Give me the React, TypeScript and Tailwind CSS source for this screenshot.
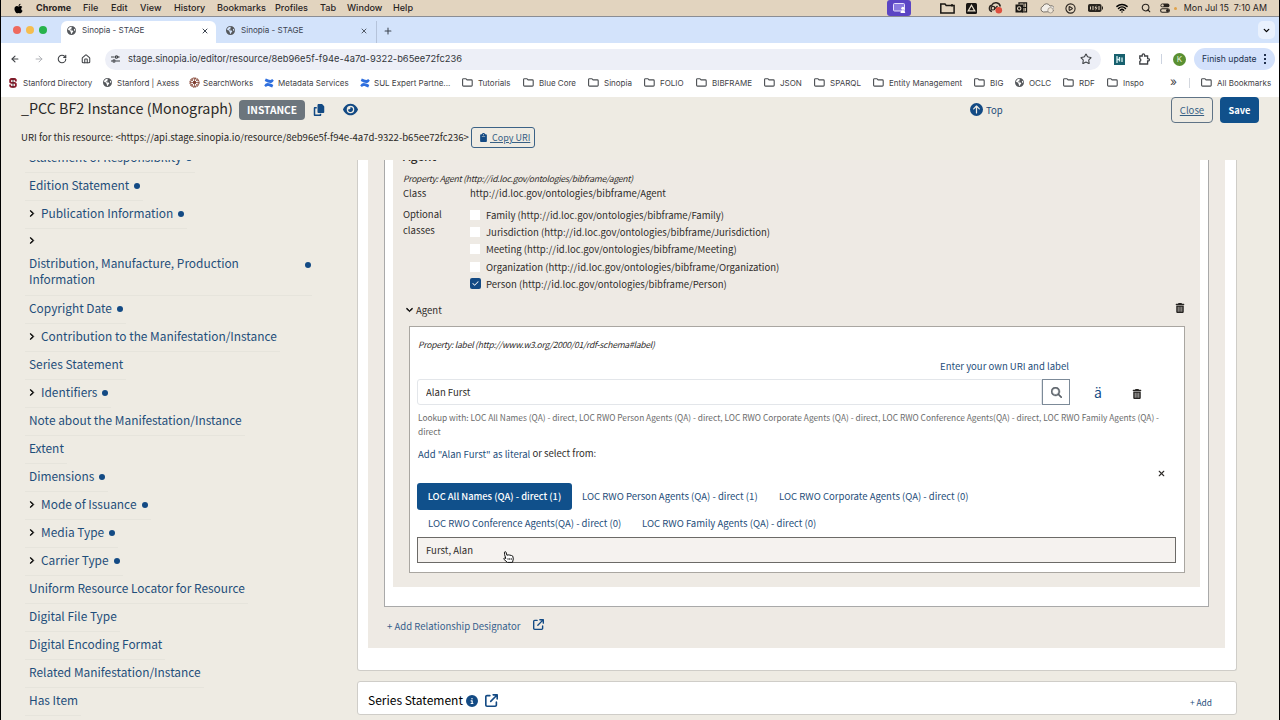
import React, { useState } from 'react';
import {
  FaApple, FaArrowUpRightFromSquare, FaCheck, FaChevronDown, FaChevronRight, FaCircleArrowUp,
  FaCircleInfo, FaClipboard, FaCopy, FaEye, FaMagnifyingGlass, FaTrashCan, FaEarthAmericas,
} from 'react-icons/fa6';
import { ArrowLeft, ArrowRight, ChevronDown, CirclePlay, House, Plus, RotateCw, Search, Star, Wifi, X } from 'lucide-react';

const MENUS = [
  { label: 'Chrome', slot: 'w-[47px] font-bold' },
  { label: 'File', slot: 'w-[28px]' },
  { label: 'Edit', slot: 'w-[29px]' },
  { label: 'View', slot: 'w-[34px]' },
  { label: 'History', slot: 'w-[43px]' },
  { label: 'Bookmarks', slot: 'w-[58px]' },
  { label: 'Profiles', slot: 'w-[45px]' },
  { label: 'Tab', slot: 'w-[27px]' },
  { label: 'Window', slot: 'w-[46px]' },
  { label: 'Help', slot: 'w-[30px]' },
];

const BOOKMARKS = [
  { label: 'Stanford Directory', icon: 'stanford', slot: 'w-[94px]' },
  { label: 'Stanford | Axess', icon: 'globe', slot: 'w-[86px]' },
  { label: 'SearchWorks', icon: 'wheel', slot: 'w-[75px]' },
  { label: 'Metadata Services', icon: 'confluence', slot: 'w-[96px]' },
  { label: 'SUL Expert Partne...', icon: 'confluence', slot: 'w-[102px]' },
  { label: 'Tutorials', icon: 'folder', slot: 'w-[61px]' },
  { label: 'Blue Core', icon: 'folder', slot: 'w-[65px]' },
  { label: 'Sinopia', icon: 'folder', slot: 'w-[56px]' },
  { label: 'FOLIO', icon: 'folder', slot: 'w-[52px]' },
  { label: 'BIBFRAME', icon: 'folder', slot: 'w-[68px]' },
  { label: 'JSON', icon: 'folder', slot: 'w-[50px]' },
  { label: 'SPARQL', icon: 'folder', slot: 'w-[59px]' },
  { label: 'Entity Management', icon: 'folder', slot: 'w-[101px]' },
  { label: 'BIG', icon: 'folder', slot: 'w-[41px]' },
  { label: 'OCLC', icon: 'globe', slot: 'w-[48px]' },
  { label: 'RDF', icon: 'folder', slot: 'w-[44px]' },
  { label: 'Inspo', icon: 'folder', slot: 'w-[63px]' },
];

const NAV = [
  { label: 'Statement of Responsibility', dot: true },
  { label: 'Edition Statement', dot: true },
  { label: 'Publication Information', dot: true, expand: true },
  { label: 'Distribution, Manufacture, Production Information', dot: true, expand: true, wrap: true },
  { label: 'Copyright Date', dot: true },
  { label: 'Contribution to the Manifestation/Instance', expand: true },
  { label: 'Series Statement' },
  { label: 'Identifiers', dot: true, expand: true },
  { label: 'Note about the Manifestation/Instance' },
  { label: 'Extent' },
  { label: 'Dimensions', dot: true },
  { label: 'Mode of Issuance', dot: true, expand: true },
  { label: 'Media Type', dot: true, expand: true },
  { label: 'Carrier Type', dot: true, expand: true },
  { label: 'Uniform Resource Locator for Resource' },
  { label: 'Digital File Type' },
  { label: 'Digital Encoding Format' },
  { label: 'Related Manifestation/Instance' },
  { label: 'Has Item' },
];

const CLASSES = ['Family', 'Jurisdiction', 'Meeting', 'Organization', 'Person'];

const BookmarkIcon: React.FC<{ kind: string }> = ({ kind }) => {
  if (kind === 'folder') {
    return (
      <svg width="11" height="9" viewBox="0 0 11 9" fill="none" stroke="#4a4d51" strokeWidth="1.1">
        <path d="M.6 1.6c0-.6.3-.9.9-.9h2.4l1.2 1.2h4.2c.6 0 .9.3.9.9v4.4c0 .6-.3.9-.9.9H1.5c-.6 0-.9-.3-.9-.9z" />
      </svg>
    );
  }
  if (kind === 'globe') return <FaEarthAmericas size={9} className="text-[#55585c]" />;
  if (kind === 'stanford') {
    return (
      <svg width="8" height="10" viewBox="0 0 8 10" fill="none" stroke="#8c1d2c">
        <path d="M6.8 3.4V2L5.8 1H2.2l-1 1v2l1 .9h3.6l1 .9v2.1l-1 1H2.2l-1-1V6.6" strokeWidth="1.9" />
        <path d="M4 .2v9.6" stroke="#4b2a30" strokeWidth="1" />
      </svg>
    );
  }
  if (kind === 'wheel') {
    return (
      <svg width="11" height="11" viewBox="0 0 12 12" stroke="#8f5547" fill="none">
        <circle cx="6" cy="6" r="4.6" strokeWidth="2" strokeDasharray="1.3 .5" />
        <path d="M6 1v10M1 6h10M2.5 2.5l7 7M9.500 2.500l-7 7" strokeWidth=".9" />
        <circle cx="6" cy="6" r="1.6" fill="#7c3b2e" stroke="none" />
      </svg>
    );
  }
  return (
    <svg width="10" height="10" viewBox="0 0 10 10" fill="#2f6fde">
      <path d="M.2 7.600C2.300 4.200 4.400 4.400 9.300 7L8.200 9.500C5 8.100 3.400 7.300 1.900 9z" />
      <path d="M9.800 2.400C7.700 5.800 5.600 5.600.700 3L1.800.5C5 1.900 6.600 2.700 8.100 1z" />
    </svg>
  );
};

const MenuBar = () => (
  <div className="h-[17px] bg-[#e2d4bf] border-b border-[#8b8d93] flex items-center pl-[12px] text-[9.1px] text-[#28231e] font-medium whitespace-nowrap">
    <div className="w-[23px]"><FaApple size={11} className="text-black" /></div>
    {MENUS.map(m => <span key={m.label} className={m.slot}>{m.label}</span>)}
    <div className="ml-[464px] w-[24px] h-[16px] rounded-[3px] bg-[#5b45c4] flex items-center justify-center">
      <svg width="13" height="10" viewBox="0 0 13 10">
        <rect x=".5" y=".5" width="11" height="7.500" rx="1" fill="#8b7be0" stroke="#e6e1fb" />
        <path d="M7.500 10c0-2 .8-2.800 2.300-2.800s2.400.8 2.400 2.800z" fill="#fff" />
        <circle cx="9.800" cy="5.200" r="1.500" fill="#fff" />
      </svg>
    </div>
    <svg className="ml-[29px]" width="15" height="11" viewBox="0 0 15 11" fill="none" stroke="#191613" strokeWidth="1.500">
      <path d="M.8 10V1h4.200l1.200 1.500h7.900V10z" />
      <path d="M12 1v2.500" />
    </svg>
    <svg className="ml-[11px]" width="11" height="11" viewBox="0 0 11 11">
      <rect width="11" height="11" rx="1.500" fill="#191613" />
      <path d="M5.500 2.300 8.800 7.900H2.200z" fill="none" stroke="#e9dfcd" strokeWidth="1.200" />
    </svg>
    <svg className="ml-[11px]" width="15" height="12" viewBox="0 0 15 12" fill="none">
      <path d="M4 9.500a3.200 3.200 0 0 1-.3-6.200 4.600 4.600 0 0 1 8.600 1.200" stroke="#2b2521" strokeWidth="1.500" />
      <circle cx="5" cy="6.200" r="1.800" stroke="#2b2521" strokeWidth="1.200" />
      <path d="M6 7.500 9.500 4" stroke="#2b2521" strokeWidth="1.200" />
      <circle cx="10.800" cy="8.200" r="3.300" fill="#dd4f3f" />
    </svg>
    <svg className="ml-[12px]" width="13" height="12" viewBox="0 0 13 12" fill="none" stroke="#191613">
      <path d="M4 2.500V.8h7.500v9H7" strokeWidth="1.300" />
      <path d="M7.500 5.500h4M9 1v8" strokeWidth="1" />
      <rect x="1" y="3" width="6.500" height="7" fill="#191613" />
      <circle cx="4.200" cy="6.500" r="1.700" stroke="#e2d4bf" strokeWidth="1.100" />
    </svg>
    <svg className="ml-[12px]" width="14" height="11" viewBox="0 0 14 11">
      <path d="M3.500 9A3 3 0 0 1 3 3.200 3.800 3.800 0 0 1 10 3a3 3 0 0 1 2.500 5.500z" fill="#f2eee8" stroke="#5d574f" strokeWidth=".8" />
      <circle cx="10.500" cy="7.300" r="2.700" fill="#efe6d8" stroke="#8b847b" strokeWidth=".7" />
    </svg>
    <CirclePlay size={11} className="ml-[11px] text-[#28231e]" strokeWidth={2.4} />
    <svg className="ml-[12px]" width="15" height="8" viewBox="0 0 15 8">
      <rect width="13.500" height="8" rx="1.800" fill="#29251f" />
      <rect x="14" y="2.500" width="1" height="3" fill="#29251f" />
      <path d="M2.500 2.500v3M5 2v4M11 2v4" stroke="#e2d4bf" />
      <path d="M8.500 1 6.500 4.300h1.400L7.200 7l2.300-3.400H8z" fill="#e2d4bf" />
    </svg>
    <Wifi size={12} className="ml-[13px] text-black" strokeWidth={3} />
    <Search size={10} className="ml-[13px] text-[#28231e]" strokeWidth={2.600} />
    <svg className="ml-[9px]" width="10" height="10" viewBox="0 0 10 10">
      <rect x=".5" y=".5" width="9" height="3.800" rx="1.900" fill="#28231e" />
      <rect x=".6" y="5.700" width="8.800" height="3.600" rx="1.800" fill="none" stroke="#28231e" strokeWidth="1.100" />
      <circle cx="2.500" cy="2.400" r="1.200" fill="#e2d4bf" />
      <circle cx="7.500" cy="7.500" r="1.500" fill="#28231e" />
    </svg>
    <i className="ml-[4px] w-[3px] h-[3px] rounded-full bg-[#e0a24a]" />
    <span className="ml-auto mr-[12px] font-normal text-[8.900px]">Mon Jul 15&nbsp; 7:10 AM</span>
  </div>
);

const TabStrip = () => (
  <div className="h-[26px] bg-[#d3e3fb] flex items-end text-[8.100px] text-[#3d4450] whitespace-nowrap">
    <div className="flex gap-[5px] pl-[12px] w-[60px] h-full items-center">
      <i className="w-[8px] h-[8px] rounded-full bg-[#ee6a5f]" />
      <i className="w-[8px] h-[8px] rounded-full bg-[#f5bd4f]" />
      <i className="w-[8px] h-[8px] rounded-full bg-[#27b34b]" />
    </div>
    <div className="w-[155px] h-[22px] rounded-t-[6px] bg-white flex items-center pl-[6px] pb-[3px]">
      <FaEarthAmericas size={9} className="text-[#55585c]" />
      <span className="ml-[6px] grow">Sinopia - STAGE</span>
      <X size={8} strokeWidth={3} className="mr-[7px]" />
    </div>
    <div className="w-[161px] h-[22px] flex items-center pl-[10px] pb-[3px] border-r border-[#b5c3da]">
      <FaEarthAmericas size={9} className="text-[#55585c]" />
      <span className="ml-[6px] grow">Sinopia - STAGE</span>
      <X size={8} strokeWidth={2.600} className="mr-[8px]" />
    </div>
    <div className="h-[22px] flex items-center pb-[3px] pl-[6px]"><Plus size={10} strokeWidth={2.500} /></div>
    <div className="ml-auto mr-[4px] mb-[4px] w-[17px] h-[18px] rounded-[5px] bg-[#e9f1fd] flex items-center justify-center text-black">
      <ChevronDown size={9} strokeWidth={3.500} />
    </div>
  </div>
);

const Toolbar = () => (
  <div className="h-[30px] bg-white flex items-center pt-[2px] text-[#3f4246] text-[9.350px] whitespace-nowrap">
    <div className="flex items-center w-[104px] pl-[9px]">
      <ArrowLeft size={10} strokeWidth={2.600} />
      <ArrowRight size={10} strokeWidth={2.200} className="ml-[14px] text-[#a9abb0]" />
      <RotateCw size={10} strokeWidth={2.600} className="ml-[13px]" />
      <House size={10} strokeWidth={2.500} className="ml-[14px]" />
    </div>
    <div className="w-[996px] h-[21px] rounded-full bg-[#edeff7] flex items-center pl-[6px]">
      <svg width="9" height="8" viewBox="0 0 9 8" fill="none" stroke="#3f4246" strokeWidth="1.200">
        <path d="M0 2h3.500M5 6h4M0 6h1" />
        <path d="M8.500 2H6" />
        <circle cx="5.500" cy="2" r="1.200" />
        <circle cx="3" cy="6" r="1.200" />
      </svg>
      <span className="ml-[8px] grow text-[#33363a]">stage.sinopia.io/editor/resource/8eb96e5f-f94e-4a7d-9322-b65ee72fc236</span>
      <Star size={12} strokeWidth={2.200} className="mr-[9px]" />
    </div>
    <div className="ml-[13px] w-[11px] h-[11px] bg-[#17606e] flex items-center justify-center">
      <svg width="7" height="7" viewBox="0 0 7 7" fill="none" stroke="#d6f0f2" strokeWidth="1.300">
        <path d="M1 0v7M1 3.500h2.500v2M3.500 1v2.500M6 1.500v4.500" />
      </svg>
    </div>
    <svg className="ml-[14px]" width="11" height="12" viewBox="0 0 11 12" fill="none" stroke="#3f4246" strokeWidth="1.300">
      <path d="M.8 3h2.400V2a1.200 1.200 0 0 1 2.400 0v1h3v2.600h.6a1.200 1.200 0 0 1 0 2.400h-.6v3H.8V8.300a1.400 1.400 0 0 0 0-2.700z" />
    </svg>
    <i className="ml-[11px] w-px h-[10px] bg-[#ccd3e0]" />
    <div className="ml-[11px] w-[13px] h-[13px] rounded-full bg-[#5a9032] text-[#e3f0da] text-[8px] flex items-center justify-center">K</div>
    <div className="ml-[8px] w-[81px] h-[22px] rounded-full bg-[#d3e1fb] flex items-center pl-[8px] text-[8.600px] text-[#20304d]">
      Finish update
      <span className="ml-auto mr-[9px] flex flex-col gap-[2px]">
        <i className="w-[2px] h-[2px] bg-[#20304d]" />
        <i className="w-[2px] h-[2px] bg-[#20304d]" />
        <i className="w-[2px] h-[2px] bg-[#20304d]" />
      </span>
    </div>
  </div>
);

const BookmarksBar = () => (
  <div className="h-[24px] bg-white flex items-center pl-[8px] pb-[5px] text-[8px] text-[#3f4246] whitespace-nowrap">
    {BOOKMARKS.map(b => (
      <div key={b.label} className={`${b.slot} flex items-center shrink-0`}>
        <span className={b.icon === 'folder' ? 'w-[16px]' : 'w-[14px]'}><BookmarkIcon kind={b.icon} /></span>
        {b.label}
      </div>
    ))}
    <span className="w-[19px] text-[12px] leading-none pb-[2px]">»</span>
    <i className="w-px h-[10px] bg-[#d3d7de]" />
    <div className="ml-[11px] flex items-center"><span className="w-[16px]"><BookmarkIcon kind="folder" /></span>All Bookmarks</div>
  </div>
);

const Header = () => (
  <div className="h-[63px] shrink-0 px-[20px] flex flex-col whitespace-nowrap">
    <div className="flex items-center h-[26px]">
      <h1 className="text-[14.300px] leading-[20px] pb-[4px] text-[#2a2826] w-[218px]">_PCC BF2 Instance (Monograph)</h1>
      <span className="w-[66px] h-[20px] rounded-[4px] bg-[#6c757d] text-white font-bold text-[10.200px] leading-[19px] text-center">INSTANCE</span>
      <FaCopy size={12} className="ml-[8px] mb-px text-[#134a84]" />
      <FaEye size={15} className="ml-[18px] mb-px text-[#134a84]" />
      <div className="ml-[612px] flex items-center gap-[3px] text-[9.550px] text-[#1e4c78]">
        <FaCircleArrowUp size={13} className="text-[#134a84] mb-px" />Top
      </div>
      <button className="ml-auto w-[42px] h-[26px] rounded-[4px] border border-[#5f7386] text-[9.550px] leading-[24px] text-[#375f83] underline">Close</button>
      <button className="ml-[7px] w-[39px] h-[26px] rounded-[4px] bg-[#10508b] text-white font-bold text-[9.300px] leading-[25px]">Save</button>
    </div>
    <div className="flex items-center h-[29px] text-[9.550px] text-[#2a2826]">
      <span className="w-[450px] pb-px">URI for this resource: &lt;https://api.stage.sinopia.io/resource/8eb96e5f-f94e-4a7d-9322-b65ee72fc236&gt;</span>
      <button className="w-[64px] h-[21px] rounded-[3px] border border-[#3b6286] leading-[18px] text-[9px] text-[#375f83] flex items-center pl-[7px]">
        <FaClipboard size={9} className="text-[#134a84] mr-[2px]" /><span className="underline whitespace-pre">{' '}Copy URI</span>
      </button>
    </div>
  </div>
);

const Sidebar = () => (
  <nav className="w-[356px] shrink-0 pl-[24px] mt-[-15px] text-[11.920px] text-[#1f4e7a] flex flex-col items-start">
    {NAV.map(item => (
      <div
        key={item.label}
        className={item.wrap
          ? 'w-[287px] h-[67px] border-b border-[#e6e4dc] pl-[4px] pr-0'
          : 'h-[28px] border-b border-[#e6e4dc] pl-[4px] pr-[3px] pb-[4px] flex items-center whitespace-nowrap'}
      >
        {item.wrap ? (
          <>
            <FaChevronRight size={7} className="mt-[8px] -ml-px text-black" stroke="black" strokeWidth={50} />
            <div className="flex items-center justify-between mt-[11px] leading-[16px]">
              <span className="w-[240px]">{item.label}</span>
              <i className="w-[6px] h-[6px] mb-[12px] mr-px rounded-full bg-[#134a84]" />
            </div>
          </>
        ) : (
          <>
            {item.expand && <FaChevronRight size={7} className="-ml-px mr-[6px] mt-[2px] text-black" stroke="black" strokeWidth={50} />}
            <span>{item.label}</span>
            {item.dot && <i className="w-[6px] h-[6px] ml-[5px] mt-[3px] rounded-full bg-[#134a84]" />}
          </>
        )}
      </div>
    ))}
  </nav>
);

const Lookup = () => {
  const [query, setQuery] = useState('Alan Furst');

  return (
    <div className="relative h-[247px] border border-[#a9a6a1] bg-white pl-[7px] pr-[8px] flex flex-col text-[9.550px]">
      <p className="mt-[9px] ml-px h-[16px] leading-[16px] italic text-[8.600px] tracking-[-0.25px]">Property: label (http://www.w3.org/2000/01/rdf-schema#label)</p>
      <div className="mt-[5px] h-[18px] leading-[18px] w-[652px] text-right text-[#1f4e7a]">Enter your own URI and label</div>
      <div className="mt-[4px] h-[26px] flex items-center">
        <input
          className="w-[625px] h-[26px] border border-[#e3e6ea] rounded-l-[3px] pl-[8px] leading-[20px] focus:outline-none"
          value={query}
          onChange={e => setQuery(e.target.value)}
        />
        <button className="w-[28px] h-[26px] border border-[#7c8a98] flex items-center justify-center text-[#5d646b]"><FaMagnifyingGlass size={11} stroke="currentColor" strokeWidth={20} /></button>
        <span className="ml-[24px] w-[38px] text-[14px] leading-[20px] text-[#134a84]">ä</span>
        <FaTrashCan size={10} className="mt-[3px] text-[#262422]" />
      </div>
      <p className="mt-[5px] ml-px leading-[14px] text-[8.360px] text-[#6b6b6b] whitespace-nowrap">
        Lookup with: LOC All Names (QA) - direct, LOC RWO Person Agents (QA) - direct, LOC RWO Corporate Agents (QA) - direct, LOC RWO Conference Agents(QA) - direct, LOC RWO Family Agents (QA) -<br />direct
      </p>
      <div className="mt-[6px] ml-px h-[18px] leading-[18px]"><span className="text-[#1f4e7a] relative top-px">Add "Alan Furst" as literal</span> or select from:</div>
      <button className="self-end mt-[7px] mr-[10px]"><X size={9} strokeWidth={3} /></button>
      <div className="mt-[5px] leading-[27px] text-[#1f4e7a] whitespace-nowrap flex flex-col">
        <div className="flex h-[27px]">
          <span className="w-[155px] rounded-[3px] bg-[#10508b] text-white text-center font-medium text-[9.350px]">LOC All Names (QA) - direct (1)</span>
          <span className="ml-[10px] w-[197px]">LOC RWO Person Agents (QA) - direct (1)</span>
          <span>LOC RWO Corporate Agents (QA) - direct (0)</span>
        </div>
        <div className="flex h-[27px] pl-[11px]">
          <span className="w-[214px]">LOC RWO Conference Agents(QA) - direct (0)</span>
          <span>LOC RWO Family Agents (QA) - direct (0)</span>
        </div>
      </div>
      <div className="h-[26px] shrink-0 border border-[#6c6a67] bg-[#f5f2ef] pl-[8px] leading-[24px]">Furst, Alan</div>
      <svg className="absolute left-[93px] top-[224px]" width="11" height="13" viewBox="0 0 11 13" fill="#fff" stroke="#111" strokeWidth="1">
        <path d="M2.800 7.500 1.600 3.600 1.500 1.200c.3-.7 1.200-.7 1.500 0l.9 3 1.300-.3 1.600.2 1.700.4 1.300.7.5 2.700-.8 3.500H4.400L.8 8.200c-.3-.8.6-1.400 1.200-1z" />
        <path d="M5 7v2M6.700 7v2M8.300 7v2" strokeWidth=".7" />
      </svg>
    </div>
  );
};

const AgentPanel = () => (
  <div className="h-[427px] flow-root bg-[#eeeae4] px-[9px] pl-[10px] text-[9.550px] text-[#302d2b]">
    <h4 className="mt-[-14px] h-[24px] leading-[20px] font-medium text-[12px]">Agent</h4>
    <p className="h-[15px] leading-[16px] italic text-[8.600px] tracking-[-0.27px]">Property: Agent (http://id.loc.gov/ontologies/bibframe/agent)</p>
    <div className="flex h-[16px] leading-[16px]">
      <span className="w-[67px]">Class</span>http://id.loc.gov/ontologies/bibframe/Agent
    </div>
    <div className="flex mt-[5px] leading-[16px]">
      <div className="w-[67px]"><p className="w-[50px]">Optional classes</p></div>
      <div>
        {CLASSES.map(c => (
          <label key={c} className="flex items-center h-[17.300px]">
            {c === 'Person'
              ? <span className="w-[11px] h-[11px] rounded-[2px] bg-[#134a84] flex items-center justify-center text-white"><FaCheck size={7} /></span>
              : <span className="w-[10px] h-[10px] mr-px bg-white" />}
            <span className="ml-[5px]">{c} (http://id.loc.gov/ontologies/bibframe/{c})</span>
          </label>
        ))}
      </div>
    </div>
    <div className="h-[34px] flex items-center justify-between pl-[3px] pr-[6px]">
      <span className="flex items-center gap-[3px] pt-px"><FaChevronDown size={7} className="text-black" stroke="black" strokeWidth={50} />Agent</span>
      <FaTrashCan size={10} className="text-[#262422] mb-[3px]" />
    </div>
    <div className="ml-[6px] mr-[6px]"><Lookup /></div>
  </div>
);

const App: React.FC = () => (
  <div className="w-[1280px] h-[720px] overflow-hidden border-x border-black flex flex-col font-['Inter','Roboto',sans-serif]">
    <MenuBar />
    <TabStrip />
    <Toolbar />
    <BookmarksBar />
    <div className="grow min-h-0 bg-[#eeebe3] flex flex-col font-['Noto_Sans_CJK_SC',sans-serif]">
      <Header />
      <div className="grow min-h-0 overflow-hidden flex">
        <Sidebar />
        <main className="w-[880px] flex flex-col">
          <section className="h-[511px] shrink-0 bg-white border border-t-0 border-[#cfcdc8] rounded-b-[3px] pl-[10px] pr-[11px]">
            <div className="h-[488px] bg-[#eeeae4] px-[16px]">
              <div className="h-[447px] bg-white border border-t-0 border-[#a9a9a9] px-[8px]"><AgentPanel /></div>
              <div className="h-[38px] flex items-center pl-[3px] text-[#375f8c] text-[9.550px]">
                + Add Relationship Designator
                <FaArrowUpRightFromSquare size={11} className="ml-[12px] mb-[3px] text-[#134a84]" />
              </div>
            </div>
          </section>
          <section className="mt-[10px] h-[34px] shrink-0 bg-white border border-[#cfcdc8] rounded-[3px] pl-[10px] pr-[24px] pt-[5px] flex items-center text-[12px] text-black whitespace-nowrap">
            <span className="pb-[2px] leading-[20px] w-[98px]">Series Statement</span>
            <FaCircleInfo size={12} className="text-[#134a84]" />
            <FaArrowUpRightFromSquare size={13} className="ml-[7px] text-[#134a84]" />
            <span className="ml-auto mt-[3px] text-[8.400px] leading-none text-[#1f4e7a]">+ Add</span>
          </section>
        </main>
      </div>
    </div>
  </div>
);

export default App;
